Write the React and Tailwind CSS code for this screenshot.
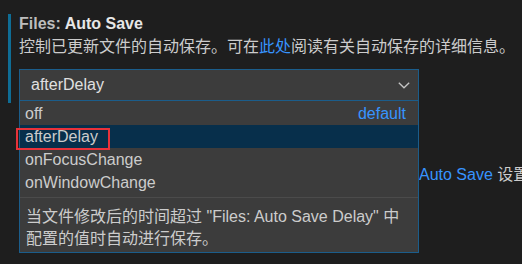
import React from 'react';

const options = [
  { value: 'off', note: 'default' },
  { value: 'afterDelay', active: true },
  { value: 'onFocusChange' },
  { value: 'onWindowChange' },
];

function Chevron() {
  return (
    <svg width="12" height="7" viewBox="0 0 12 7" fill="none">
      <path d="M0.8 0.8 L6 5.8 L11.2 0.8" stroke="#c5c5c5" strokeWidth="1.3" />
    </svg>
  );
}

export default function App() {
  return (
    <div className="relative w-[522px] h-[264px] overflow-hidden bg-[#1e1e1e] text-[#cccccc] text-[16px] font-['Liberation_Sans','Noto_Sans_CJK_SC',sans-serif]">
      {/* Files: Auto Save */}
      <div className="flex pt-[14px] pl-[8px]">
        <div className="w-[3px] h-[89px] shrink-0 bg-[#0f6d95]" />
        <div className="ml-[8px]">
          <div className="mt-[1px] leading-[18px] font-bold whitespace-nowrap">
            <span className="text-[#bdbdbd]">Files: </span>
            <span className="text-[#e7e7e7]">Auto Save</span>
          </div>
          <div className="mt-[3px] leading-[22px] whitespace-nowrap">
            控制已更新文件的自动保存。可在<span className="text-[#3794ff]">此处</span>阅读有关自动保存的详细信息。
          </div>

          <div className="relative mt-[11px] w-[400px]">
            <div className="h-[32px] flex items-center bg-[#3c3c3c] border border-[#1b5d8b] pl-[11px]">
              <span className="text-[#e0e0e0]">afterDelay</span>
              <span className="ml-auto mr-[8px] flex">
                <Chevron />
              </span>
            </div>

            {/* open dropdown */}
            <div className="absolute z-10 top-full left-0 w-full bg-[#3c3c3c] border-x border-b border-[#1b5d8b] pt-[1px]">
              {options.map(o => (
                <div
                  key={o.value}
                  className={
                    'relative h-[23px] flex items-center justify-between pl-[5px] pr-[12px] ' +
                    (o.active ? 'bg-[#072f4b]' : '')
                  }
                >
                  <span className="text-[#cccccc]">{o.value}</span>
                  {o.note && <span className="text-[#3794ff]">{o.note}</span>}
                  {o.active && (
                    <div className="absolute left-[-4px] top-[3px] w-[94px] h-[22px] border-2 border-[#e8323a]" />
                  )}
                </div>
              ))}
              <div className="mt-[3px] border-t border-[#4b4b4b] pl-[6px] pt-[8px] pb-[2px] leading-[22px] text-[#cccccc]">
                <div>当文件修改后的时间超过 "Files: Auto Save Delay" 中</div>
                <div>配置的值时自动进行保存。</div>
              </div>
            </div>
          </div>
        </div>
      </div>

      {/* Files: Auto Save Delay (under the dropdown) */}
      <div className="mt-[39px] pl-[19px]">
        <div className="leading-[18px] font-bold whitespace-nowrap">
          <span className="text-[#bdbdbd]">Files: </span>
          <span className="text-[#e7e7e7]">Auto Save Delay</span>
        </div>
        <div className="mt-[4px] flex leading-[22px] whitespace-nowrap">
          <span className="w-[400px] shrink-0 overflow-hidden">控制在多少毫秒后自动保存更改过的文件。仅在 Files:</span>
          <span className="text-[#3794ff]">Auto Save</span>
          <span>&nbsp;设置为 afterDelay 时适用。</span>
        </div>
      </div>
    </div>
  );
}
